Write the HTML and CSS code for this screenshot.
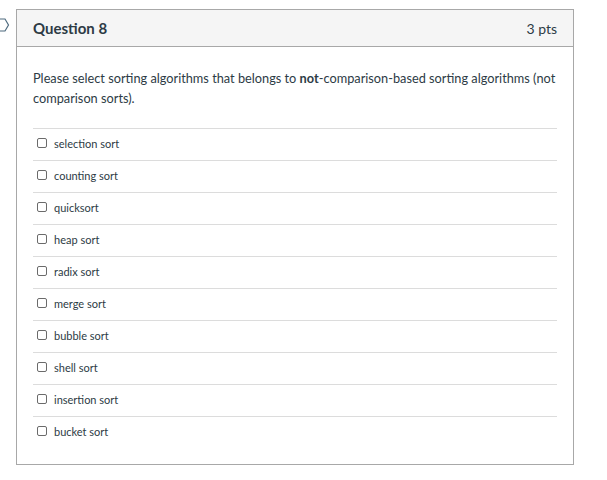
FILE: index.html
```html
<!DOCTYPE html>
<html>
<head>
<meta charset="utf-8">
<link rel="stylesheet" href="styles.css">
</head>
<body>
<svg class="marker" width="10" height="14" viewBox="0 0 10 14"><path d="M-4 1 H5 L8.5 7 L5 13 H-4" fill="none" stroke="#4f6b7f" stroke-width="1.2"/></svg>
<div class="card">
  <div class="header">
    <span class="title">Question 8</span>
    <span class="pts">3 pts</span>
  </div>
  <div class="body">
    <p class="question">Please select sorting algorithms that belongs to <strong>not</strong>-comparison-based sorting algorithms (not comparison sorts).</p>
    <div class="answers">
      <label class="answer"><span class="box"></span>selection sort</label>
      <label class="answer"><span class="box"></span>counting sort</label>
      <label class="answer"><span class="box"></span>quicksort</label>
      <label class="answer"><span class="box"></span>heap sort</label>
      <label class="answer"><span class="box"></span>radix sort</label>
      <label class="answer"><span class="box"></span>merge sort</label>
      <label class="answer"><span class="box"></span>bubble sort</label>
      <label class="answer"><span class="box"></span>shell sort</label>
      <label class="answer"><span class="box"></span>insertion sort</label>
      <label class="answer"><span class="box"></span>bucket sort</label>
    </div>
  </div>
</div>
</body>
</html>
```
FILE: styles.css
```css
html, body {
  margin: 0;
  padding: 0;
  background: #fff;
}
body {
  font-family: Lato, "Liberation Sans", sans-serif;
  color: #2d3b45;
  position: relative;
}
.marker {
  position: absolute;
  left: 0;
  top: 18px;
}
.card {
  margin: 9px 0 0 16px;
  width: 556px;
  border: 1px solid #a8a8a8;
}
.header {
  height: 36px;
  background: #f5f5f5;
  border-bottom: 1px solid #a8a8a8;
  display: flex;
  align-items: center;
  justify-content: space-between;
  padding: 0 16px;
}
.title {
  font-weight: bold;
  font-size: 15px;
}
.pts {
  font-size: 14px;
}
.body {
  padding: 21px 16px 16px;
}
.question {
  margin: 0;
  font-size: 12.75px;
  line-height: 20px;
}
.question strong {
  font-weight: bold;
}
.answers {
  margin-top: 20px;
}
.answer {
  display: flex;
  align-items: center;
  height: 28px;
  padding: 0 0 3px 4px;
  border-top: 1px solid #dcdcdc;
  font-size: 11px;
}
.box {
  width: 8px;
  height: 8px;
  border: 1px solid #6b6b6b;
  border-radius: 2px;
  margin-right: 7px;
}
```
